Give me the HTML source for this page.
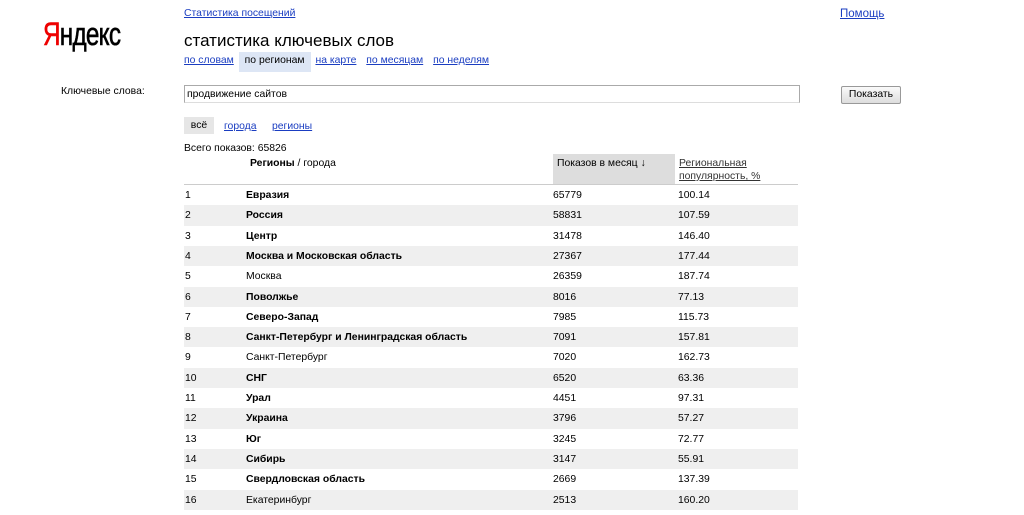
<!DOCTYPE html>
<html><head><meta charset="utf-8"><style>
body{margin:0;width:1024px;height:515px;background:#fff;font-family:"Liberation Sans","Noto Sans CJK SC",sans-serif;font-size:10.4px;color:#000;position:relative;overflow:hidden}
.a{position:absolute;white-space:nowrap}
a,.l{color:#1a3dc1;text-decoration:underline}
.r{position:absolute;left:184px;width:614px;height:20.3px;line-height:21px}
.r.g{background:#efefef}
.r span{position:absolute}
.n{left:1px}.t{left:62px}.c{left:369px}.p{left:494px}
b{font-weight:bold}
</style></head><body>
<div class="a" style="left:43px;top:16px;font-size:32px;letter-spacing:-1px;transform:scaleX(.76);transform-origin:left;-webkit-text-stroke:0.6px #000"><span style="color:#e00;-webkit-text-stroke:0.6px #e00">Я</span>ндекс</div>
<div class="a l" style="left:184px;top:8px">Статистика посещений</div>
<div class="a l" style="left:840px;top:8px;font-size:11.5px">Помощь</div>
<div class="a" style="left:184px;top:31px;font-size:17px">статистика ключевых слов</div>
<div class="a" style="left:184px;top:52px;height:20px;line-height:18px">
<span class="l">по словам</span>
<span style="display:inline-block;background:#dde6f5;padding:0 6px;margin-left:2px;height:20px">по регионам</span>
<span class="l" style="margin-left:2px">на карте</span>
<span class="l" style="margin-left:7px">по месяцам</span>
<span class="l" style="margin-left:7px">по неделям</span></div>
<div class="a" style="left:61px;top:86px">Ключевые слова:</div>
<div class="a" style="left:184px;top:85px;width:612px;height:16px;border:1px solid #aaa;border-bottom-color:#ddd;line-height:17px;padding-left:2px">продвижение сайтов</div>
<div class="a" style="left:841px;top:86px;width:58px;height:16px;border:1px solid #999;border-radius:2px;background:linear-gradient(#fafafa,#ddd);text-align:center;line-height:16px">Показать</div>
<div class="a" style="left:184px;top:117px;width:30px;height:17px;background:#e6e6e6;text-align:center;line-height:17px">всё</div>
<div class="a l" style="left:224px;top:121px">города</div>
<div class="a l" style="left:272px;top:121px">регионы</div>
<div class="a" style="left:184px;top:143px">Всего показов: 65826</div>
<div class="a" style="left:250px;top:158px"><b>Регионы</b> / города</div>
<div class="a" style="left:553px;top:154px;width:122px;height:30px;background:#ddd"><span style="position:absolute;left:4px;top:4px">Показов в месяц ↓</span></div>
<div class="a l" style="left:679px;top:157px;line-height:13px;color:#333">Региональная<br>популярность, %</div>
<div class="a" style="left:184px;top:184px;width:614px;height:1px;background:#ccc"></div>
<div class="r" style="top:185px"><span class="n">1</span><span class="t"><b>Евразия</b></span><span class="c">65779</span><span class="p">100.14</span></div>
<div class="r g" style="top:205.3px"><span class="n">2</span><span class="t"><b>Россия</b></span><span class="c">58831</span><span class="p">107.59</span></div>
<div class="r" style="top:225.6px"><span class="n">3</span><span class="t"><b>Центр</b></span><span class="c">31478</span><span class="p">146.40</span></div>
<div class="r g" style="top:245.9px"><span class="n">4</span><span class="t"><b>Москва и Московская область</b></span><span class="c">27367</span><span class="p">177.44</span></div>
<div class="r" style="top:266.2px"><span class="n">5</span><span class="t">Москва</span><span class="c">26359</span><span class="p">187.74</span></div>
<div class="r g" style="top:286.5px"><span class="n">6</span><span class="t"><b>Поволжье</b></span><span class="c">8016</span><span class="p">77.13</span></div>
<div class="r" style="top:306.8px"><span class="n">7</span><span class="t"><b>Северо-Запад</b></span><span class="c">7985</span><span class="p">115.73</span></div>
<div class="r g" style="top:327.1px"><span class="n">8</span><span class="t"><b>Санкт-Петербург и Ленинградская область</b></span><span class="c">7091</span><span class="p">157.81</span></div>
<div class="r" style="top:347.4px"><span class="n">9</span><span class="t">Санкт-Петербург</span><span class="c">7020</span><span class="p">162.73</span></div>
<div class="r g" style="top:367.7px"><span class="n">10</span><span class="t"><b>СНГ</b></span><span class="c">6520</span><span class="p">63.36</span></div>
<div class="r" style="top:388px"><span class="n">11</span><span class="t"><b>Урал</b></span><span class="c">4451</span><span class="p">97.31</span></div>
<div class="r g" style="top:408.3px"><span class="n">12</span><span class="t"><b>Украина</b></span><span class="c">3796</span><span class="p">57.27</span></div>
<div class="r" style="top:428.6px"><span class="n">13</span><span class="t"><b>Юг</b></span><span class="c">3245</span><span class="p">72.77</span></div>
<div class="r g" style="top:448.9px"><span class="n">14</span><span class="t"><b>Сибирь</b></span><span class="c">3147</span><span class="p">55.91</span></div>
<div class="r" style="top:469.2px"><span class="n">15</span><span class="t"><b>Свердловская область</b></span><span class="c">2669</span><span class="p">137.39</span></div>
<div class="r g" style="top:489.5px"><span class="n">16</span><span class="t">Екатеринбург</span><span class="c">2513</span><span class="p">160.20</span></div>
</body></html>
